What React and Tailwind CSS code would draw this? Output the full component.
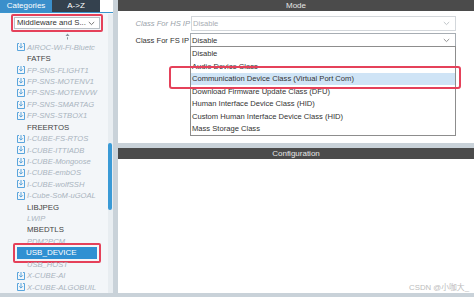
const items = [
  { name: "AIROC-Wi-Fi-Bluetc", off: true, icon: true },
  { name: "FATFS" },
  { name: "FP-SNS-FLIGHT1", off: true, icon: true },
  { name: "FP-SNS-MOTENV1", off: true, icon: true },
  { name: "FP-SNS-MOTENVW", off: true, icon: true },
  { name: "FP-SNS-SMARTAG", off: true, icon: true },
  { name: "FP-SNS-STBOX1", off: true, icon: true },
  { name: "FREERTOS" },
  { name: "I-CUBE-FS-RTOS", off: true, icon: true },
  { name: "I-CUBE-ITTIADB", off: true, icon: true },
  { name: "I-CUBE-Mongoose", off: true, icon: true },
  { name: "I-CUBE-embOS", off: true, icon: true },
  { name: "I-CUBE-wolfSSH", off: true, icon: true },
  { name: "I-Cube-SoM-uGOAL", off: true, icon: true },
  { name: "LIBJPEG" },
  { name: "LWIP", off: true },
  { name: "MBEDTLS" },
  { name: "PDM2PCM", off: true },
  { name: "USB_DEVICE", selected: true },
  { name: "USB_HOST", off: true },
  { name: "X-CUBE-AI", off: true, icon: true },
  { name: "X-CUBE-ALGOBUIL", off: true, icon: true },
];

const options = [
  "Disable",
  "Audio Device Class",
  "Communication Device Class (Virtual Port Com)",
  "Download Firmware Update Class (DFU)",
  "Human Interface Device Class (HID)",
  "Custom Human Interface Device Class (HID)",
  "Mass Storage Class",
];

function PackIcon() {
  return (
    <svg width="10" height="10" viewBox="0 0 10 10" fill="none" stroke="#5aa5dc" strokeWidth="1">
      <path d="M3 1.5H1.5V8.5H8.5V1.5H7" />
      <path d="M5 1V6M3.2 4.3L5 6.1L6.8 4.3" />
    </svg>
  );
}

function Chevron({ color = "#888" }) {
  return (
    <svg width="7" height="5" viewBox="0 0 7 5" fill="none" stroke={color} strokeWidth="0.9">
      <path d="M0.8 1L3.5 3.6L6.2 1" />
    </svg>
  );
}

function App() {
  return (
    <div
      className="w-[474px] h-[297px] bg-[#c9d2d9] flex pb-[4px] gap-[5px] overflow-hidden text-[7.6px] text-[#333]"
      style={{ fontFamily: '"Liberation Sans", Arial, "Noto Sans CJK SC", sans-serif' }}
    >
      {/* left: categories */}
      <div className="w-[113px] bg-[#f3f6f9] flex flex-col relative overflow-hidden">
        <div className="h-[13px] flex border-b border-[#3a95cf] shrink-0 bg-white">
          <div className="w-[52px] bg-[#3b8fcb] text-white flex items-center justify-center text-[8px]">Categories</div>
          <div className="w-[48px] bg-[#34414e] text-white flex items-center justify-center text-[8px]">A-&gt;Z</div>
        </div>

        <div className="mt-[1px] ml-[11px] w-[92px] h-[18px] border-2 border-[#e5415a] rounded-[2px] p-px">
          <div className="h-full bg-white border border-[#b9c0c6] flex items-center justify-between pl-[2px] pr-[4px] text-[#333] text-[7.8px]">
            <span>Middleware and S...</span>
            <Chevron color="#666" />
          </div>
        </div>

        <div className="h-[12px] flex justify-center items-center pl-[22px]">
          <svg width="5" height="7" viewBox="0 0 5 7" fill="#8a949c">
            <path d="M2.5 0.5L4.5 3H0.5Z" />
            <rect x="2" y="4.2" width="1" height="2.3" />
          </svg>
        </div>

        <div className="flex flex-col">
          {items.map((it) => (
            <div key={it.name} className="h-[11.43px] flex items-center pl-[16px] relative">
              {it.selected ? (
                <div className="absolute left-[13px] top-[-4.5px] w-[88px] h-[20px] border-2 border-[#e5415a] rounded-[2px] p-[2px]">
                  <div className="h-full bg-[#2f90d2] text-white flex items-center pl-[9px] text-[8px]">{it.name}</div>
                </div>
              ) : (
                <>
                  <div className="w-[11px] flex items-center">{it.icon && <PackIcon />}</div>
                  <span
                    className={
                      it.off
                        ? "italic text-[#a9b4be] whitespace-nowrap"
                        : "text-[#444] whitespace-nowrap text-[7.8px]"
                    }
                  >
                    {it.name}
                  </span>
                </>
              )}
            </div>
          ))}
        </div>

        <div className="absolute right-0 top-[14px] bottom-0 w-[5px] bg-[#e8edf1]" />
        <div className="absolute right-[1px] top-[143px] w-[4px] h-[67px] rounded-[2px] bg-[#3a9ad6]" />
      </div>

      {/* right: mode + configuration */}
      <div className="flex-1 flex flex-col gap-[5px]">
        <div className="h-[143px] bg-white flex flex-col relative">
          <div className="h-[11px] bg-[#4b4b4b] text-[#e6e6e6] flex items-center justify-center text-[8px]">Mode</div>

          <div className="flex items-center mt-[5px] h-[15px]">
            <div className="w-[73px] text-right pr-[1px] italic text-[#9aa2a9]">Class For HS IP</div>
            <div className="w-[265px] h-full border border-[#d3d7db] flex items-center justify-between pl-[1px] pr-[5px] text-[#a8aeb4]">
              <span>Disable</span>
              <Chevron color="#b9bec3" />
            </div>
          </div>

          <div className="flex items-center mt-[2px] h-[15px]">
            <div className="w-[72px] text-right pr-[1px] text-[#333]">Class For FS IP</div>
            <div className="w-[266px] h-full border border-[#a7adb3] flex items-center justify-between pl-[1px] pr-[5px] text-[#333]">
              <span>Disable</span>
              <Chevron color="#888" />
            </div>
          </div>

          {/* open dropdown */}
          <div className="absolute left-[72px] top-[46px] w-[266px] h-[90px] border border-[#8d8d8d] bg-white flex flex-col pt-[0.5px]">
            {options.map((o, i) => (
              <div
                key={o}
                className={
                  "h-[12.5px] flex items-center pl-[1px] whitespace-nowrap " +
                  (i === 2 ? "bg-[#cfe4f6]" : "")
                }
              >
                {o}
              </div>
            ))}
          </div>

          <div className="absolute left-[51px] top-[66px] w-[292px] h-[23px] border-2 border-[#e5415a] rounded-[3px]" />
        </div>

        <div className="flex-1 bg-white flex flex-col relative">
          <div className="h-[11px] bg-[#4b4b4b] text-[#e6e6e6] flex items-center justify-center text-[8px]">Configuration</div>
          <div className="absolute right-[3px] bottom-0 h-[11px] px-[2px] bg-white/80 text-[#bcbcbc] text-[7.8px] flex items-center">
            CSDN @小咖大_
          </div>
        </div>
      </div>
    </div>
  );
}

export default App;
